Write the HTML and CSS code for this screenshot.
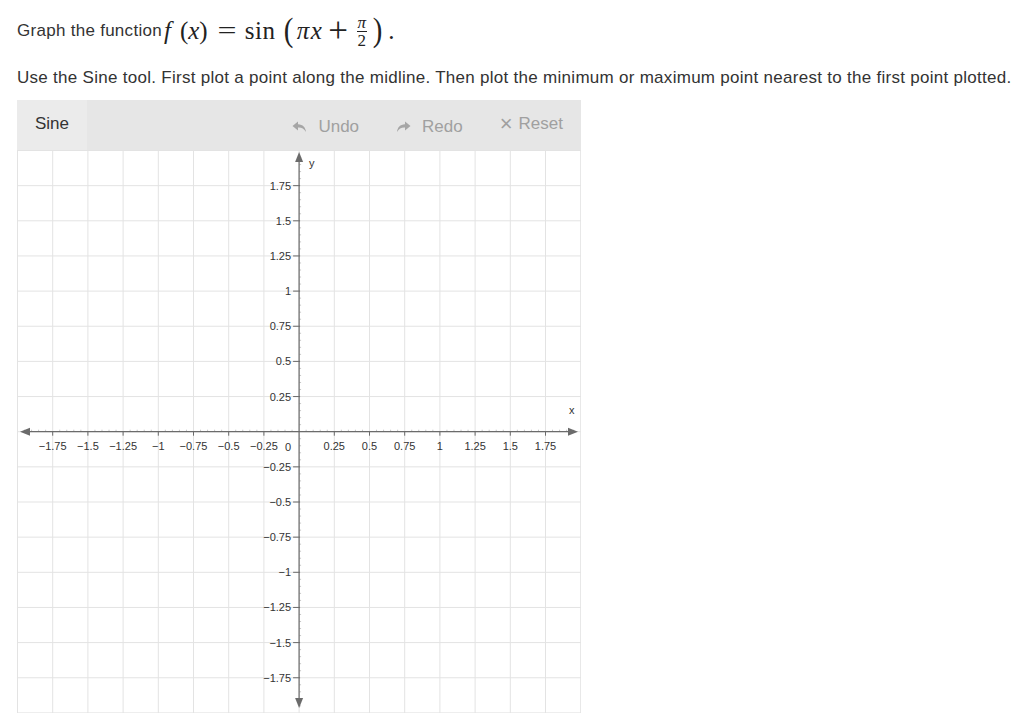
FILE: index.html
```html
<!DOCTYPE html>
<html>
<head>
<meta charset="utf-8">
<link rel="stylesheet" href="styles.css">
</head>
<body>
<div class="page">
  <div class="title">
    <span class="lead">Graph the function</span>
    <span class="math">
      <i class="mi f">f</i><span class="mo">(</span><i class="mi">x</i><span class="mo">)</span>
      <span class="rel">=</span>
      <span class="fn">sin</span>
      <span class="bigp">(</span><i class="mi px">πx</i><span class="bin">+</span>
      <span class="frac"><span class="num"><i>π</i></span><span class="den">2</span></span>
      <span class="bigp">)</span><span class="dot">.</span>
    </span>
  </div>
  <p class="instr">Use the Sine tool. First plot a point along the midline. Then plot the minimum or maximum point nearest to the first point plotted.</p>
  <div class="tool">
    <div class="toolbar">
      <div class="sine">Sine</div>
      <div class="actions">
        <span class="act undo">
          <svg width="15" height="12" viewBox="0 0 15 12"><path d="M6 0.5 L0.5 5 L6 9.5 L6 6.6 C9.5 6.4 12 7.6 14 11 C13.5 6.5 11 3.5 6 3.3 Z" fill="#a6a6a6"/></svg>
          <span>Undo</span>
        </span>
        <span class="act redo">
          <svg width="15" height="12" viewBox="0 0 15 12"><path d="M9 0.5 L14.5 5 L9 9.5 L9 6.6 C5.5 6.4 3 7.6 1 11 C1.5 6.5 4 3.5 9 3.3 Z" fill="#a6a6a6"/></svg>
          <span>Redo</span>
        </span>
        <span class="act reset">
          <span class="x">×</span>
          <span>Reset</span>
        </span>
      </div>
    </div>
    <div class="graph">
      <svg width="565" height="563" viewBox="0 0 565 563" id="g">
        <g id="grid" stroke="#e3e3e3" stroke-width="1"></g>
        <g id="minor" stroke="#c8c8c8" stroke-width="1"></g>
        <g id="axes" stroke="#6b6b6b" stroke-width="1.2">
          <line x1="10" y1="281.7" x2="555" y2="281.7"/>
          <line x1="282.1" y1="8" x2="282.1" y2="552"/>
        </g>
        <g fill="#6b6b6b">
          <polygon points="3,281.7 13,277.7 13,285.7"/>
          <polygon points="561,281.7 551,277.7 551,285.7"/>
          <polygon points="282.1,2 278.1,12 286.1,12"/>
          <polygon points="282.1,558 278.1,548 286.1,548"/>
        </g>
        <g id="ticks" stroke="#6b6b6b" stroke-width="1"></g>
        <g id="labels" font-family="Liberation Sans, Arial, sans-serif" font-size="11" fill="#333"></g>
      </svg>
    </div>
  </div>
</div>
<script src="graph.js"></script>
</body>
</html>
```
FILE: graph.js
```js
(function(){
  var ns = "http://www.w3.org/2000/svg";
  var cx = 35.2, cy = 35.15, ox = 0.5, oy = 0.5;
  var ax = ox + 8*cx, ay = oy + 8*cy;
  function el(parent, tag, attrs, text){
    var e = document.createElementNS(ns, tag);
    for (var k in attrs) e.setAttribute(k, attrs[k]);
    if (text !== undefined) e.textContent = text;
    document.getElementById(parent).appendChild(e);
  }
  for (var i = 0; i <= 16; i++) {
    var x = ox + i*cx, y = oy + i*cy;
    el("grid","line",{x1:x,y1:0,x2:x,y2:563});
    el("grid","line",{x1:0,y1:y,x2:565,y2:y});
  }
  for (var i = 0; i < 16; i++) {
    for (var j = 1; j < 5; j++) {
      var x = ox + (i + j/5)*cx, y = oy + (i + j/5)*cy;
      el("minor","line",{x1:x,y1:ay-2,x2:x,y2:ay});
      el("minor","line",{x1:ax,y1:y,x2:ax+2,y2:y});
    }
  }
  function fmt(v){
    var s = String(Math.abs(v));
    return (v < 0 ? "\u2212" : "") + s;
  }
  for (var i = 1; i <= 7; i++) {
    [-1,1].forEach(function(sg){
      var v = sg*i*0.25;
      var x = ax + sg*i*cx;
      el("ticks","line",{x1:x,y1:ay,x2:x,y2:ay+4});
      el("labels","text",{x:x,y:ay+18,"text-anchor":"middle"}, fmt(v));
      var y = ay - sg*i*cy;
      el("ticks","line",{x1:ax-6,y1:y,x2:ax+1,y2:y});
      el("labels","text",{x:ax-8,y:y+4,"text-anchor":"end"}, fmt(v));
    });
  }
  el("labels","text",{x:ax-14,y:ay+19}, "0");
  el("labels","text",{x:ax+10,y:17}, "y");
  el("labels","text",{x:552,y:ay-18}, "x");
})();
```
FILE: styles.css
```css
html, body {
  margin: 0;
  padding: 0;
  background: #fff;
}
body {
  font-family: "Liberation Sans", Arial, sans-serif;
  color: #333;
}
.page {
  padding: 14px 0 0 17px;
}
.title {
  display: flex;
  align-items: center;
  height: 34px;
  white-space: nowrap;
}
.lead {
  font-size: 17px;
  letter-spacing: 0.28px;
  color: #333;
  margin-right: 2px;
}
.math {
  font-family: "Liberation Serif", "Times New Roman", serif;
  font-size: 25px;
  color: #222;
  display: inline-flex;
  align-items: center;
}
.mi { font-style: italic; }
.f { margin-right: 9px; }
.rel {
  margin: 0 11px 0 12px;
  display: inline-block;
  transform: scaleX(1.35);
}
.fn { margin-right: 6px; letter-spacing: 0.5px; }
.bigp {
  font-size: 34px;
  line-height: 1;
  transform: scaleX(0.85);
  margin: 0 2px;
  position: relative;
  top: -1px;
}
.px { letter-spacing: 1.5px; }
.bin {
  margin: 0 8px 0 8px;
  display: inline-block;
  transform: scale(1.4);
}
.frac {
  display: inline-flex;
  flex-direction: column;
  align-items: center;
  font-size: 17px;
  line-height: 15px;
  margin: 0 3px;
}
.frac .num {
  border-bottom: 1px solid #222;
  padding: 0 1px 1px;
}
.frac .den { padding-top: 1px; }
.dot { margin-left: 3px; }
.instr {
  margin: 21px 0 0 0;
  font-size: 17px;
  letter-spacing: 0.28px;
  line-height: 18px;
  color: #333;
}
.tool {
  margin-top: 13px;
  width: 564px;
}
.toolbar {
  display: flex;
  align-items: center;
  height: 50px;
  background: #e6e6e6;
}
.sine {
  width: 70px;
  height: 100%;
  display: flex;
  align-items: center;
  justify-content: center;
  background: #ebebeb;
  font-size: 17px;
  color: #333;
  padding-bottom: 2px;
  box-sizing: border-box;
}
.actions {
  flex: 1;
  display: flex;
  justify-content: flex-end;
  align-items: center;
  padding-right: 18px;
  color: #a0a0a0;
  font-size: 17px;
}
.act {
  display: inline-flex;
  align-items: center;
  margin-left: 37px;
}
.act svg { margin-right: 11px; }
.undo { margin-top: 3px; }
.redo { margin-top: 3px; }
.reset { margin-top: -2px; }
.x {
  font-size: 22px;
  line-height: 1;
  margin-right: 6px;
}
.graph {
  height: 563px;
  overflow: hidden;
}
.graph svg { display: block; }
```
